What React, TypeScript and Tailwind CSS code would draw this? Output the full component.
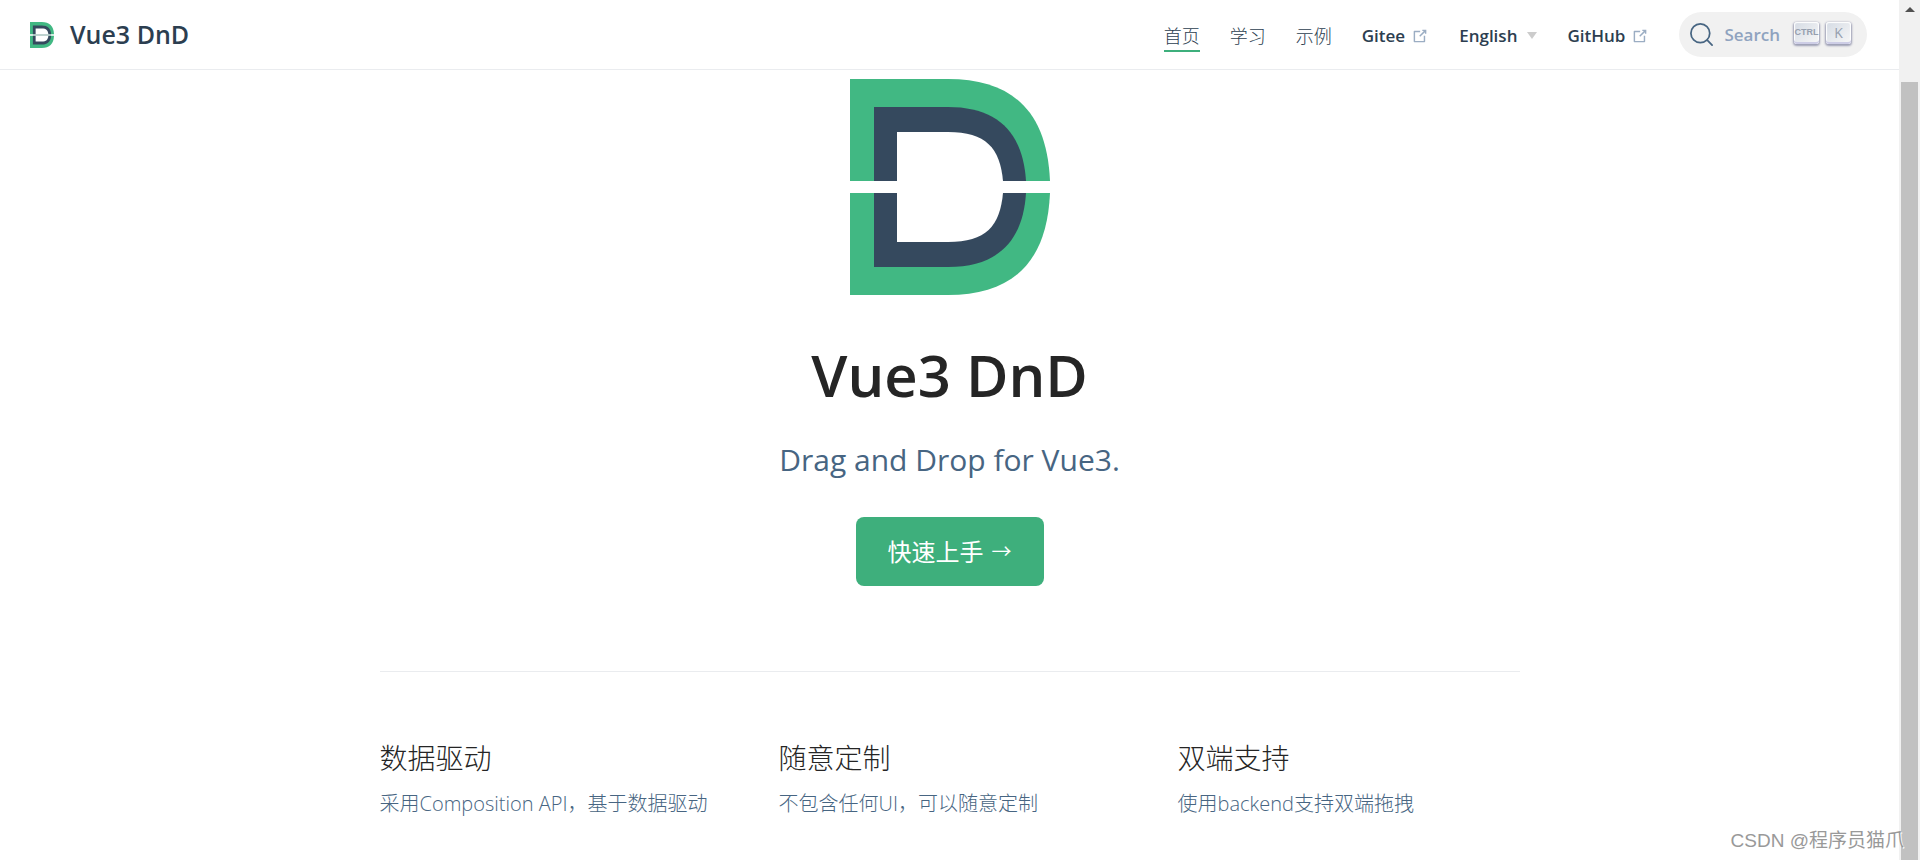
import { ReactNode } from "react";

interface NavItem {
  text: string;
  link: string;
  active?: boolean;
  external?: boolean;
}

const navItems: NavItem[] = [
  { text: "首页", link: "/", active: true },
  { text: "学习", link: "/guide/" },
  { text: "示例", link: "/example/" },
  { text: "Gitee", link: "#gitee", external: true },
];

const features = [
  { title: "数据驱动", details: "采用Composition API，基于数据驱动" },
  { title: "随意定制", details: "不包含任何UI，可以随意定制" },
  { title: "双端支持", details: "使用backend支持双端拖拽" },
];

const Logo = ({ className }: { className: string }) => (
  <svg viewBox="0 0 200 216" className={className} role="img" aria-label="Vue3 DnD">
    <g fill="#41b883">
      <path d="M0 0H98C162 0 197 32 200 102H0Z" />
      <path d="M0 216H98C162 216 197 184 200 114H0Z" />
    </g>
    <g fill="#35495e">
      <path d="M24 28H98C148 28 173 54 176 102H24Z" />
      <path d="M24 188H98C148 188 173 162 176 114H24Z" />
    </g>
    <g fill="#fff">
      <path d="M47 53H98C136 53 150 69 153 102H47Z" />
      <path d="M47 163H98C136 163 150 147 153 114H47Z" />
    </g>
  </svg>
);

const OutboundIcon = () => (
  <svg viewBox="0 0 100 100" className="w-[18px] h-[18px] text-[#9badc3]" aria-hidden="true">
    <path
      fill="currentColor"
      d="M18.8,85.1h56l0,0c2.2,0,4-1.8,4-4v-32h-8v28h-48v-48h28v-8h-32l0,0c-2.2,0-4,1.8-4,4v56C14.8,83.3,16.6,85.1,18.8,85.1z"
    />
    <polygon
      fill="currentColor"
      points="45.7,48.7 51.3,54.3 77.2,28.5 77.2,37.2 85.2,37.2 85.2,14.9 62.8,14.9 62.8,22.9 71.5,22.9"
    />
  </svg>
);

const Key = ({ children }: { children: ReactNode }) => (
  <kbd className="flex items-center justify-center w-[25px] h-[22px] rounded-[3px] bg-linear-to-br from-[#d5dbe4] to-[#f8f8f8] text-[#969faf] shadow-[inset_0_-2px_0_0_#cdcde6,inset_0_0_1px_1px_#fff,0_1px_2px_1px_rgba(30,35,90,0.4)]">
    {children}
  </kbd>
);

const Navbar = () => (
  <header className="flex items-center justify-between h-[70px] pl-[30px] pr-8 border-b border-[#eaecef] text-[#2c3e50] shrink-0">
    <a href="/" className="flex items-center gap-4">
      <Logo className="w-6 h-[26px]" />
      <span className="pb-0.5 text-[25px] leading-8 font-semibold">Vue3 DnD</span>
    </a>

    <div className="flex items-center gap-[30px]">
      <nav className="flex items-center gap-[30px] pt-1 text-lg">
        {navItems.map((item) => (
          <a
            key={item.text}
            href={item.link}
            className={
              item.active
                ? "leading-7 font-light border-b-2 border-[#3eaf7c]"
                : item.external
                  ? "flex items-center gap-1.5 leading-7 text-[17px] font-semibold border-b-2 border-transparent"
                  : "leading-7 font-light border-b-2 border-transparent"
            }
          >
            {item.text}
            {item.external && <OutboundIcon />}
          </a>
        ))}
        <button type="button" className="flex items-center gap-2.5 leading-7 text-[17px] font-semibold border-b-2 border-transparent">
          English
          <span className="border-x-5 border-x-transparent border-t-[7px] border-t-[#ccc]" />
        </button>
        <a href="#github" className="flex items-center gap-1.5 leading-7 text-[17px] font-semibold border-b-2 border-transparent">
          GitHub
          <OutboundIcon />
        </a>
      </nav>

      <button type="button" className="flex items-center h-[45px] pl-[10px] pr-4 rounded-full bg-[#f1f1f1] text-[#8fa3bf]">
        <svg width="25" height="25" viewBox="0 0 20 20" className="text-[#476582]" aria-hidden="true">
          <path
            d="M14.386 14.386l4.0877 4.0877-4.0877-4.0877c-2.9418 2.9419-7.7115 2.9419-10.6533 0-2.9419-2.9418-2.9419-7.7115 0-10.6533 2.9418-2.9419 7.7115-2.9419 10.6533 0 2.9419 2.9418 2.9419 7.7115 0 10.6533z"
            stroke="currentColor"
            strokeWidth="1.4"
            fill="none"
            strokeLinecap="round"
            strokeLinejoin="round"
          />
        </svg>
        <span className="pl-2.5 pr-3.5 text-[17px] font-semibold">Search</span>
        <span className="flex gap-[7px] pb-1">
          <Key>
            <span className="font-['Liberation_Sans_Narrow','Liberation_Sans',sans-serif] text-[9px] font-bold">CTRL</span>
          </Key>
          <Key>
            <span className="font-['Open_Sans',sans-serif] text-sm">K</span>
          </Key>
        </span>
      </button>
    </div>
  </header>
);

const Home = () => (
  <main className="w-full max-w-[1200px] mx-auto px-[30px]">
    <section className="flex flex-col items-center pt-[9px] text-center">
      <Logo className="w-[200px] h-[216px]" />
      <h1 className="mt-[42px] text-[58px] leading-[76px] font-semibold text-[#252525]">Vue3 DnD</h1>
      <p className="mt-[26px] text-[30px] leading-[42px] text-[#476582]">Drag and Drop for Vue3.</p>
      <a
        href="/guide/"
        className="mt-9 flex items-center gap-2 h-[69px] px-8 rounded-lg bg-[#3eaf7c] text-2xl text-white"
      >
        快速上手 <span className="text-xl">→</span>
      </a>
    </section>

    <section className="flex justify-between mt-[85px] pt-[68px] border-t border-[#eaecef]">
      {features.map((feature) => (
        <div key={feature.title} className="w-[30%]">
          <h2 className="text-[28px] leading-9 font-light text-[#252525]">{feature.title}</h2>
          <p className="mt-[14px] text-xl leading-7 font-light text-[#476582] whitespace-nowrap">{feature.details}</p>
        </div>
      ))}
    </section>
  </main>
);

const Scrollbar = () => (
  <div className="flex flex-col items-center w-[21px] bg-[#f1f1f1] shrink-0" aria-hidden="true">
    <svg viewBox="0 0 10 5" className="mt-[7px] w-[10px] h-[5px]">
      <path d="M5 0L10 5H0Z" fill="#505050" />
    </svg>
    <div className="mt-[70px] w-[17px] grow bg-[#c1c1c1]" />
  </div>
);

export default function App() {
  return (
    <div className="relative flex h-screen overflow-hidden bg-white font-['Open_Sans','Noto_Sans_CJK_SC',sans-serif]">
      <div className="flex flex-col grow">
        <Navbar />
        <Home />
      </div>
      <Scrollbar />
      <span className="absolute right-4 bottom-[5px] text-[19px] text-[#999] font-['Liberation_Sans','Noto_Sans_CJK_SC',sans-serif] [text-shadow:1px_1px_0_#fff]">
        CSDN @程序员猫爪
      </span>
    </div>
  );
}
